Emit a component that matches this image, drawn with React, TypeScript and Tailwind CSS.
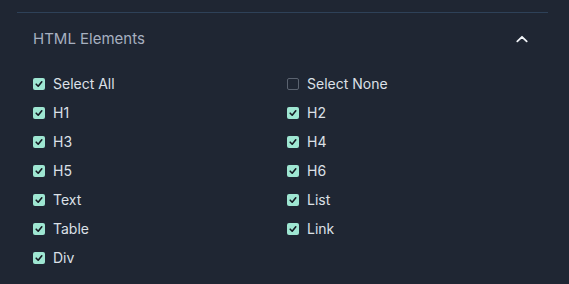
import { useState } from 'react';

const items = [
    'Select All', 'Select None',
    'H1', 'H2',
    'H3', 'H4',
    'H5', 'H6',
    'Text', 'List',
    'Table', 'Link',
    'Div',
];

function Box({ checked }: { checked: boolean }) {
    if (!checked) {
        return <span className="w-[12px] h-[12px] rounded-[2px] border border-[#5b6370] shrink-0" />;
    }
    return (
        <span className="w-[12px] h-[12px] rounded-[2px] bg-[#9ee6d2] shrink-0 flex items-center justify-center">
            <svg width="10" height="10" viewBox="0 0 10 10" fill="none">
                <path d="M2.2 5.2 L4.2 7.2 L7.8 2.8" stroke="#141a22" strokeWidth="1.6" strokeLinecap="round" strokeLinejoin="round" />
            </svg>
        </span>
    );
}

export default function App() {
    const [open] = useState(true);

    return (
        <div className="w-[569px] h-[284px] bg-[#1f2633] overflow-hidden" style={{ fontFamily: 'Inter, "Noto Sans", sans-serif' }}>
            <div className="ml-[17px] mr-[21px] mt-3 border-t border-[#2e4158]">

                {/* Header */}
                <div className="flex items-center justify-between pl-4 pr-[20px] pt-[13px] h-[39px]">
                    <span className="text-[15px] text-[#a7b0c0] leading-6">HTML Elements</span>
                    <svg width="12" height="8" viewBox="0 0 12 8" fill="none" className={open ? '' : 'rotate-180'}>
                        <path d="M1.3 6.3 L6 1.8 L10.7 6.3" stroke="#f1f4f8" strokeWidth="1.8" strokeLinecap="round" strokeLinejoin="round" />
                    </svg>
                </div>

                {/* Options */}
                <div className="grid grid-cols-[254px_254px] pl-[16px] pt-[17px]">
                    {items.map((label) => (
                        <label key={label} className="flex items-center gap-[8px] h-[29px] text-[14px] text-[#dce0e7]">
                            <Box checked={label !== 'Select None'} />
                            <span>{label}</span>
                        </label>
                    ))}
                </div>

            </div>
        </div>
    );
}
